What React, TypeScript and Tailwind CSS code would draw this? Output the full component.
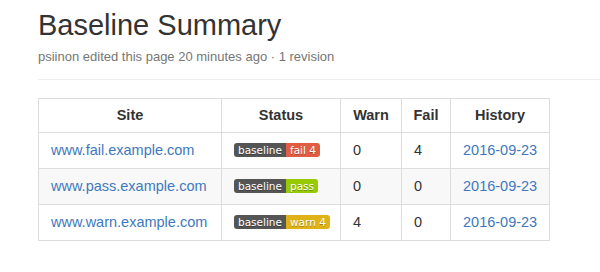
const rows = [
  { site: "www.fail.example.com", label: "fail 4", color: "bg-[#e05d44]", warn: 0, fail: 4 },
  { site: "www.pass.example.com", label: "pass", color: "bg-[#97ca00]", warn: 0, fail: 0 },
  { site: "www.warn.example.com", label: "warn 4", color: "bg-[#dfb317]", warn: 4, fail: 0 },
];

function Badge({ label, color }: { label: string; color: string }) {
  return (
    <div className="flex h-[14px] w-max overflow-hidden rounded-[3px] font-['DejaVu_Sans',sans-serif] text-[10.5px] leading-[14px] text-white [text-shadow:0_1px_0_rgba(1,1,1,0.3)]">
      <span className="bg-[#555] px-[4px]">baseline</span>
      <span className={`${color} px-[4px]`}>{label}</span>
    </div>
  );
}

export default function App() {
  return (
    <div className="min-h-[272px] bg-white pl-[38px] pt-[7px] font-['Liberation_Sans',Arial,sans-serif] text-[#333]">
      <div className="border-b border-[#eee] pb-[13px]">
        <h1 className="text-[29px] leading-[36px] text-[#333]">Baseline Summary</h1>
        <div className="mt-[5px] text-[13px] leading-[18px] text-[#767676]">
          psiinon edited this page 20 minutes ago · 1 revision
        </div>
      </div>

      <table className="mt-[18px] w-[511px] table-fixed border-collapse whitespace-nowrap text-[14.5px]">
        <colgroup>
          <col className="w-[183px]" />
          <col className="w-[119px]" />
          <col className="w-[61px]" />
          <col className="w-[49px]" />
          <col className="w-[99px]" />
        </colgroup>
        <thead>
          <tr className="h-[34px] font-bold">
            <th className="border border-[#ddd] text-center">Site</th>
            <th className="border border-[#ddd] text-center">Status</th>
            <th className="border border-[#ddd] text-center">Warn</th>
            <th className="border border-[#ddd] text-center">Fail</th>
            <th className="border border-[#ddd] text-center">History</th>
          </tr>
        </thead>
        <tbody>
          {rows.map((r, i) => (
            <tr key={r.site} className={i % 2 === 1 ? "h-[36px] bg-[#f8f8f8]" : "h-[36px] bg-white"}>
              <td className="border border-[#ddd] px-[12px] text-[#4078c0]">{r.site}</td>
              <td className="border border-[#ddd] px-[12px] pt-[10px] align-top">
                <Badge label={r.label} color={r.color} />
              </td>
              <td className="border border-[#ddd] px-[12px]">{r.warn}</td>
              <td className="border border-[#ddd] px-[12px]">{r.fail}</td>
              <td className="border border-[#ddd] px-[12px] text-[#4078c0]">2016-09-23</td>
            </tr>
          ))}
        </tbody>
      </table>
    </div>
  );
}
